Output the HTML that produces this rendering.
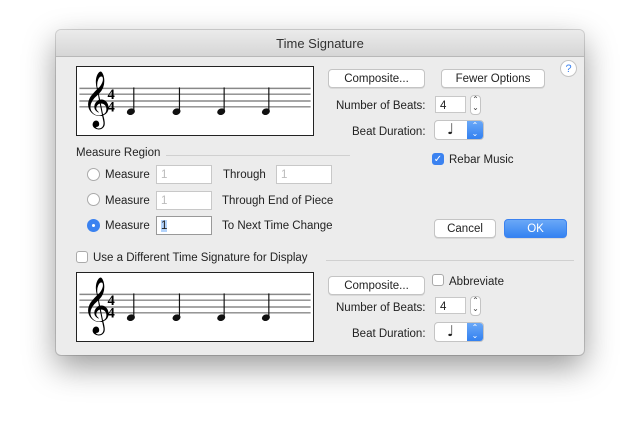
<!DOCTYPE html>
<html><head><style>
body{margin:0;width:640px;height:436px;background:#fff;font-family:"Liberation Sans",sans-serif;font-size:11.5px;color:#222;position:relative;overflow:hidden}
.win{position:absolute;left:56px;top:30px;width:528px;height:325px;background:#ececec;border-radius:5px;box-shadow:0 12px 32px rgba(0,0,0,.4),0 0 0 1px rgba(0,0,0,.15)}
.title{position:absolute;left:56px;top:30px;width:528px;height:26px;background:linear-gradient(#ebebeb,#d6d6d6);border-bottom:1px solid #b8b8b8;border-radius:5px 5px 0 0;text-align:center;line-height:28px;font-size:13px;color:#333}
.a{position:absolute}
.t{position:absolute;margin-top:2px}
.btn{position:absolute;height:17px;background:#fff;border:1px solid #c4c4c4;border-radius:4px;box-shadow:0 1px 0 rgba(0,0,0,.08);text-align:center;line-height:18px;font-size:11.5px}
.fld{position:absolute;height:17px;background:#fff;border:1px solid #c8c8c8;line-height:19px;padding-left:4px;box-sizing:border-box}
.dis{color:#bbb}
.rad{position:absolute;width:13px;height:13px;border-radius:50%;background:#fff;border:1px solid #aaa;box-sizing:border-box}
.chk{position:absolute;width:12px;height:12px;border-radius:3px;background:#fff;border:1px solid #aaa;box-sizing:border-box}
.staff{position:absolute;background:#fff;border:1px solid #222;box-sizing:border-box}
.step{position:absolute;width:11px;height:20px;border:1px solid #c4c4c4;border-radius:4px;background:#fff;box-sizing:border-box;font-size:8px;line-height:8px;text-align:center;color:#444}
.pop{position:absolute;width:50px;height:20px;border:1px solid #c4c4c4;border-radius:4px;background:#fff;box-sizing:border-box;overflow:hidden}
.pop i{position:absolute;right:0;top:0;width:16px;height:18px;background:linear-gradient(#6aa8f7,#2f7ef0);color:#fff;font-style:normal;font-size:8px;line-height:8px;text-align:center;padding-top:1px}
.hr{position:absolute;height:1px;background:#d0d0d0}
</style></head><body>
<div class="win"></div>
<div class="title">Time Signature</div>

<svg class="staff" style="left:76px;top:66px" width="238" height="70" viewBox="0 0 238 70">
<g stroke="#888" stroke-width="1.5"><line x1="0" y1="22" x2="238" y2="22"/><line x1="0" y1="28" x2="238" y2="28"/><line x1="0" y1="35" x2="238" y2="35"/><line x1="0" y1="41" x2="238" y2="41"/></g>
<text x="3" y="50" font-size="50" font-family="DejaVu Sans">𝄞</text>
<text x="29" y="33" font-size="15" font-weight="bold" font-family="Liberation Serif">4</text>
<text x="29" y="46" font-size="15" font-weight="bold" font-family="Liberation Serif">4</text>
<g fill="#111" stroke="#111" stroke-width="1.2"><ellipse cx="53" cy="46" rx="3.6" ry="2.7" transform="rotate(-20 53 46)"/><line x1="56" y1="45" x2="56" y2="21"/>
<ellipse cx="100" cy="46" rx="3.6" ry="2.7" transform="rotate(-20 100 46)"/><line x1="103" y1="45" x2="103" y2="21"/>
<ellipse cx="146" cy="46" rx="3.6" ry="2.7" transform="rotate(-20 146 46)"/><line x1="149" y1="45" x2="149" y2="21"/>
<ellipse cx="192" cy="46" rx="3.6" ry="2.7" transform="rotate(-20 192 46)"/><line x1="195" y1="45" x2="195" y2="21"/></g>
</svg>

<div class="btn" style="left:328px;top:69px;width:95px">Composite...</div>
<div class="btn" style="left:441px;top:69px;width:102px">Fewer Options</div>
<div class="a" style="left:560px;top:60px;width:15px;height:15px;border-radius:50%;background:#fff;border:1px solid #c4c4c4;color:#3b82f0;text-align:center;line-height:16px;font-size:11px">?</div>

<div class="t" style="left:336px;top:98px">Number of Beats:</div>
<div class="fld" style="left:435px;top:96px;width:31px">4</div>
<div class="step" style="left:470px;top:95px">⌃<br>⌄</div>
<div class="t" style="left:352px;top:124px">Beat Duration:</div>
<div class="pop" style="left:434px;top:120px"><span class="a" style="left:12px;top:-1px;font-size:15px;font-family:'DejaVu Sans'">♩</span><i>⌃<br>⌄</i></div>

<div class="t" style="left:76px;top:145px">Measure Region</div>
<div class="hr" style="left:166px;top:155px;width:184px"></div>
<div class="chk" style="left:432px;top:153px;background:#3b82f0;border-color:#3b82f0;color:#fff;font-size:10px;line-height:11px;text-align:center">✓</div>
<div class="t" style="left:449px;top:152px">Rebar Music</div>

<div class="rad" style="left:87px;top:168px"></div><div class="t" style="left:105px;top:167px">Measure</div>
<div class="fld dis" style="left:156px;top:165px;width:56px;height:19px">1</div>
<div class="t" style="left:223px;top:167px">Through</div>
<div class="fld dis" style="left:276px;top:165px;width:56px;height:19px">1</div>

<div class="rad" style="left:87px;top:193px"></div><div class="t" style="left:105px;top:193px">Measure</div>
<div class="fld dis" style="left:156px;top:191px;width:56px;height:19px">1</div>
<div class="t" style="left:222px;top:193px">Through End of Piece</div>

<div class="rad" style="left:87px;top:219px;background:#3b82f0;border-color:#3b82f0"><div class="a" style="left:4px;top:4px;width:3px;height:3px;border-radius:50%;background:#fff"></div></div>
<div class="t" style="left:105px;top:218px">Measure</div>
<div class="fld" style="left:156px;top:216px;width:56px;height:19px;border-color:#999"><span style="background:#b3d3fb">1</span></div>
<div class="t" style="left:222px;top:218px">To Next Time Change</div>

<div class="btn" style="left:434px;top:219px;width:60px">Cancel</div>
<div class="btn" style="left:504px;top:219px;width:61px;background:linear-gradient(#6aa8f7,#3583f1);border-color:#3b82f0;color:#fff">OK</div>

<div class="chk" style="left:76px;top:251px"></div>
<div class="t" style="left:93px;top:250px">Use a Different Time Signature for Display</div>
<div class="hr" style="left:326px;top:260px;width:248px"></div>

<svg class="staff" style="left:76px;top:272px" width="238" height="70" viewBox="0 0 238 70">
<g stroke="#888" stroke-width="1.5"><line x1="0" y1="22" x2="238" y2="22"/><line x1="0" y1="28" x2="238" y2="28"/><line x1="0" y1="35" x2="238" y2="35"/><line x1="0" y1="41" x2="238" y2="41"/></g>
<text x="3" y="50" font-size="50" font-family="DejaVu Sans">𝄞</text>
<text x="29" y="33" font-size="15" font-weight="bold" font-family="Liberation Serif">4</text>
<text x="29" y="46" font-size="15" font-weight="bold" font-family="Liberation Serif">4</text>
<g fill="#111" stroke="#111" stroke-width="1.2"><ellipse cx="53" cy="46" rx="3.6" ry="2.7" transform="rotate(-20 53 46)"/><line x1="56" y1="45" x2="56" y2="21"/>
<ellipse cx="100" cy="46" rx="3.6" ry="2.7" transform="rotate(-20 100 46)"/><line x1="103" y1="45" x2="103" y2="21"/>
<ellipse cx="146" cy="46" rx="3.6" ry="2.7" transform="rotate(-20 146 46)"/><line x1="149" y1="45" x2="149" y2="21"/>
<ellipse cx="192" cy="46" rx="3.6" ry="2.7" transform="rotate(-20 192 46)"/><line x1="195" y1="45" x2="195" y2="21"/></g>
</svg>

<div class="btn" style="left:328px;top:276px;width:95px">Composite...</div>
<div class="chk" style="left:432px;top:274px"></div>
<div class="t" style="left:449px;top:274px">Abbreviate</div>
<div class="t" style="left:336px;top:300px">Number of Beats:</div>
<div class="fld" style="left:435px;top:297px;width:31px">4</div>
<div class="step" style="left:470px;top:296px">⌃<br>⌄</div>
<div class="t" style="left:352px;top:326px">Beat Duration:</div>
<div class="pop" style="left:434px;top:322px"><span class="a" style="left:12px;top:-1px;font-size:15px;font-family:'DejaVu Sans'">♩</span><i>⌃<br>⌄</i></div>
</body></html>
